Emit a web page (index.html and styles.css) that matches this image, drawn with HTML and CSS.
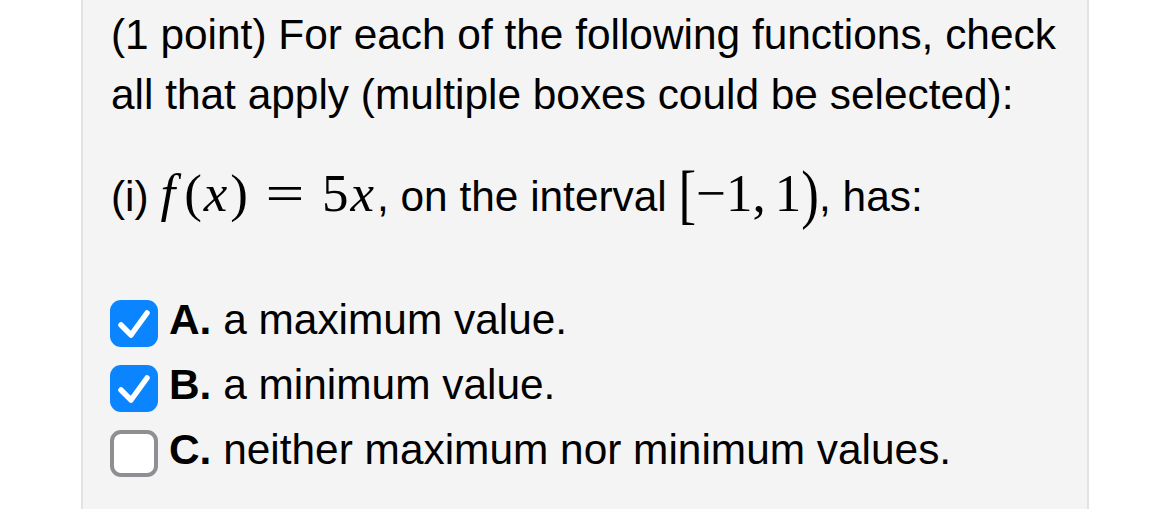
FILE: index.html
```html
<!DOCTYPE html>
<html lang="en">
<head>
<meta charset="utf-8">
<title>Problem</title>
<link rel="stylesheet" href="styles.css">
</head>
<body>
<div class="page">
  <div class="panel">
    <p class="intro">(1 point) For each of the following functions, check all that apply (multiple boxes could be selected):</p>
    <p class="question">(i) <span class="math"><span class="mi f">f</span><span class="mo">(</span><span class="mi x">x</span><span class="mo">)</span><span class="rel">=</span><span class="mn">5</span><span class="mi x">x</span></span>, on the interval <span class="math"><span class="big">[</span><span class="mo">−</span><span class="mn">1</span><span class="punct">,</span><span class="mn">1</span><span class="big">)</span></span>, has:</p>
    <div class="options">
      <label class="option">
        <span class="box checked"><svg viewBox="0 0 48 47" width="48" height="47"><path d="M11 25 L21 35 L37 13" fill="none" stroke="#fff" stroke-width="5.5" stroke-linecap="round" stroke-linejoin="round"/></svg></span>
        <span class="label"><b>A.</b> a maximum value.</span>
      </label>
      <label class="option">
        <span class="box checked"><svg viewBox="0 0 48 47" width="48" height="47"><path d="M11 25 L21 35 L37 13" fill="none" stroke="#fff" stroke-width="5.5" stroke-linecap="round" stroke-linejoin="round"/></svg></span>
        <span class="label"><b>B.</b> a minimum value.</span>
      </label>
      <label class="option">
        <span class="box"></span>
        <span class="label"><b>C.</b> neither maximum nor minimum values.</span>
      </label>
    </div>
  </div>
</div>
</body>
</html>
```
FILE: styles.css
```css
html, body {
  margin: 0;
  padding: 0;
  background: #ffffff;
}
.page {
  display: flex;
  min-height: 509px;
  padding-left: 81px;
}
.panel {
  width: 976px;
  border-left: 2px solid #e3e3e3;
  border-right: 2px solid #e3e3e3;
  background: #f4f4f4;
  padding: 5px 0 0 28px;
  box-sizing: content-box;
  font-family: "Liberation Sans", Arial, sans-serif;
  font-size: 42.4px;
  line-height: 60px;
  color: #000;
}
.panel p {
  margin: 0;
}
.intro {
  width: 970px;
}
.question {
  margin-top: 42px !important;
  height: 60px;
  white-space: nowrap;
}
.math {
  font-family: "Liberation Serif", "Times New Roman", serif;
  font-size: 53px;
  line-height: 0;
}
.mi {
  font-style: italic;
}
.f {
  margin-right: 9px;
}
.x {
  margin: 0 3px 0 2px;
}
.rel {
  display: inline-block;
  transform: scaleX(1.3);
  margin: 0 22px;
}
.punct {
  margin-right: 9px;
}
.big {
  display: inline-block;
  transform: scaleY(1.25);
}
.options {
  display: flex;
  flex-direction: column;
  gap: 18px;
  margin-top: 73px;
}
.option {
  display: flex;
  align-items: flex-end;
  gap: 11px;
  height: 47px;
}
.box {
  width: 48px;
  height: 47px;
  box-sizing: border-box;
  border-radius: 11px;
  background: #ffffff;
  border: 4px solid #8e8e93;
  flex: none;
  margin-left: -1px;
}
.box.checked {
  background: #0a84ff;
  border: none;
}
.box svg {
  display: block;
}
.label {
  line-height: 47px;
  position: relative;
  top: -4px;
  white-space: nowrap;
}
.label b {
  font-weight: bold;
}
```
